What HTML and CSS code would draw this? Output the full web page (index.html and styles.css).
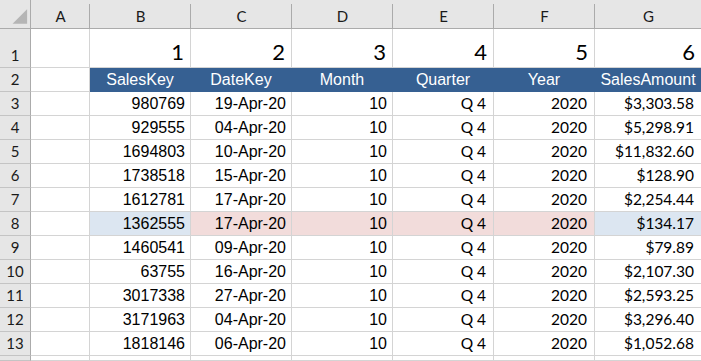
FILE: index.html
```html
<!DOCTYPE html>
<html lang="en">
<head>
    <meta charset="UTF-8">
    <meta name="viewport" content="width=device-width, initial-scale=1.0">
    <title>Sales sheet</title>
    <link rel="stylesheet" href="styles.css">
</head>
<body>
    <div class="sheet">
        <!-- column headers -->
        <div class="corner">
            <svg width="31" height="29" viewBox="0 0 31 29"><polygon points="13,25 28,25 28,10" fill="#b5b5b5"/></svg>
        </div>
        <div class="ch">A</div>
        <div class="ch">B</div>
        <div class="ch">C</div>
        <div class="ch">D</div>
        <div class="ch">E</div>
        <div class="ch">F</div>
        <div class="ch">G</div>

        <!-- row 1 -->
        <div class="rh tall">1</div>
        <div class="c"></div>
        <div class="c big">1</div>
        <div class="c big">2</div>
        <div class="c big">3</div>
        <div class="c big">4</div>
        <div class="c big">5</div>
        <div class="c big">6</div>

        <!-- row 2 -->
        <div class="rh">2</div>
        <div class="c"></div>
        <div class="c hd">SalesKey</div>
        <div class="c hd">DateKey</div>
        <div class="c hd">Month</div>
        <div class="c hd">Quarter</div>
        <div class="c hd">Year</div>
        <div class="c hd">SalesAmount</div>

        <div class="rh">3</div>
        <div class="c"></div>
        <div class="c num">980769</div>
        <div class="c num">19-Apr-20</div>
        <div class="c num">10</div>
        <div class="c cal">Q 4</div>
        <div class="c cal">2020</div>
        <div class="c cal">$3,303.58</div>

        <div class="rh">4</div>
        <div class="c"></div>
        <div class="c num">929555</div>
        <div class="c num">04-Apr-20</div>
        <div class="c num">10</div>
        <div class="c cal">Q 4</div>
        <div class="c cal">2020</div>
        <div class="c cal">$5,298.91</div>

        <div class="rh">5</div>
        <div class="c"></div>
        <div class="c num">1694803</div>
        <div class="c num">10-Apr-20</div>
        <div class="c num">10</div>
        <div class="c cal">Q 4</div>
        <div class="c cal">2020</div>
        <div class="c cal">$11,832.60</div>

        <div class="rh">6</div>
        <div class="c"></div>
        <div class="c num">1738518</div>
        <div class="c num">15-Apr-20</div>
        <div class="c num">10</div>
        <div class="c cal">Q 4</div>
        <div class="c cal">2020</div>
        <div class="c cal">$128.90</div>

        <div class="rh">7</div>
        <div class="c"></div>
        <div class="c num">1612781</div>
        <div class="c num">17-Apr-20</div>
        <div class="c num">10</div>
        <div class="c cal">Q 4</div>
        <div class="c cal">2020</div>
        <div class="c cal">$2,254.44</div>

        <div class="rh">8</div>
        <div class="c"></div>
        <div class="c num blue">1362555</div>
        <div class="c num pink">17-Apr-20</div>
        <div class="c num pink">10</div>
        <div class="c cal pink">Q 4</div>
        <div class="c cal pink">2020</div>
        <div class="c cal blue">$134.17</div>

        <div class="rh">9</div>
        <div class="c"></div>
        <div class="c num">1460541</div>
        <div class="c num">09-Apr-20</div>
        <div class="c num">10</div>
        <div class="c cal">Q 4</div>
        <div class="c cal">2020</div>
        <div class="c cal">$79.89</div>

        <div class="rh">10</div>
        <div class="c"></div>
        <div class="c num">63755</div>
        <div class="c num">16-Apr-20</div>
        <div class="c num">10</div>
        <div class="c cal">Q 4</div>
        <div class="c cal">2020</div>
        <div class="c cal">$2,107.30</div>

        <div class="rh">11</div>
        <div class="c"></div>
        <div class="c num">3017338</div>
        <div class="c num">27-Apr-20</div>
        <div class="c num">10</div>
        <div class="c cal">Q 4</div>
        <div class="c cal">2020</div>
        <div class="c cal">$2,593.25</div>

        <div class="rh">12</div>
        <div class="c"></div>
        <div class="c num">3171963</div>
        <div class="c num">04-Apr-20</div>
        <div class="c num">10</div>
        <div class="c cal">Q 4</div>
        <div class="c cal">2020</div>
        <div class="c cal">$3,296.40</div>

        <div class="rh">13</div>
        <div class="c"></div>
        <div class="c num">1818146</div>
        <div class="c num">06-Apr-20</div>
        <div class="c num">10</div>
        <div class="c cal">Q 4</div>
        <div class="c cal">2020</div>
        <div class="c cal">$1,052.68</div>

        <!-- row 14, only its top edge is in view -->
        <div class="rh"></div>
        <div class="c"></div>
        <div class="c"></div>
        <div class="c"></div>
        <div class="c"></div>
        <div class="c"></div>
        <div class="c"></div>
        <div class="c"></div>
    </div>
</body>
</html>
```

FILE: styles.css
```css
* {
    margin: 0;
    padding: 0;
    box-sizing: border-box;
}

html, body {
    width: 100%;
    height: 100%;
    overflow: hidden;
    background: #ffffff;
}

body {
    font-family: "Liberation Sans", Arial, sans-serif;
    color: #000000;
}

.sheet {
    display: grid;
    grid-template-columns: 31px 59px 101px 101px 101px 101px 101px 107px;
    grid-template-rows: 29px 39px repeat(12, 24px) 5px;
}

.corner {
    background: #e6e6e6;
    border-right: 1px solid #ababab;
    border-bottom: 1px solid #ababab;
    display: flex;
    align-items: flex-end;
    justify-content: flex-end;
    overflow: hidden;
}

.corner svg {
    display: block;
}

.ch {
    background: linear-gradient(#ababab, #ababab) right bottom / 1px 24px no-repeat, #e6e6e6;
    border-bottom: 1px solid #ababab;
    font-family: Lato, "Open Sans", sans-serif;
    font-size: 15px;
    line-height: 23px;
    padding-top: 5px;
    text-align: center;
    color: #1a1a1a;
}

.rh {
    background: #e6e6e6;
    border-right: 1px solid #ababab;
    border-bottom: 1px solid #c4c4c4;
    font-family: Lato, "Open Sans", sans-serif;
    font-size: 15px;
    line-height: 23px;
    text-align: center;
    color: #1a1a1a;
}

.rh.tall {
    display: flex;
    align-items: flex-end;
    justify-content: center;
}

.c {
    border-right: 1px solid #d4d4d4;
    border-bottom: 1px solid #d4d4d4;
    font-size: 16px;
    line-height: 23px;
    text-align: right;
    padding-right: 5px;
    white-space: nowrap;
    overflow: hidden;
}

.cal {
    font-family: Lato, "Open Sans", sans-serif;
    font-size: 15.5px;
    padding-right: 7px;
}

.big {
    font-family: Lato, "Open Sans", sans-serif;
    font-size: 22px;
    line-height: 22px;
    display: flex;
    align-items: flex-end;
    justify-content: flex-end;
    padding-bottom: 4px;
    padding-right: 6px;
}

.hd {
    background: #366092;
    border-right-color: #366092;
    border-bottom-color: #366092;
    color: #ffffff;
    text-align: center;
    padding-right: 0;
}

.blue {
    background: #dce6f1;
}

.pink {
    background: #f2dcdb;
}
```
